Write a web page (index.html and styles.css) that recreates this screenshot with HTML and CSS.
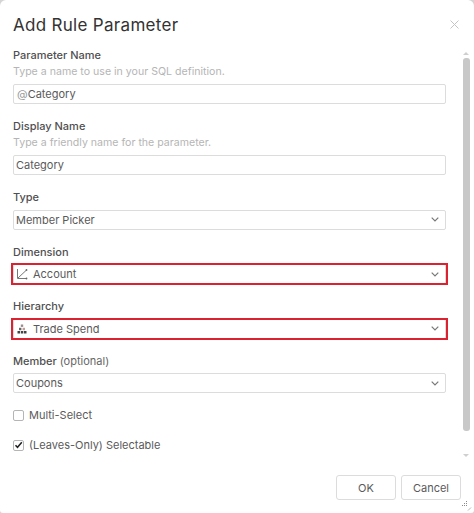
FILE: index.html
```html
<!DOCTYPE html>
<html lang="en">
<head>
  <meta charset="UTF-8">
  <meta name="viewport" content="width=device-width, initial-scale=1.0">
  <title>Add Rule Parameter</title>
  <link rel="stylesheet" href="styles.css">
</head>
<body>
  <div class="dialog">
    <div class="dialog-header">
      <h1>Add Rule Parameter</h1>
      <svg class="close-icon" width="9" height="9" viewBox="0 0 9 9"><path d="M.5.5l8 8M8.500.5l-8 8"/></svg>
    </div>

    <div class="dialog-main">
      <div class="form">
        <div class="field">
          <div class="label">Parameter Name</div>
          <div class="hint">Type a name to use in your SQL definition.</div>
          <div class="control"><span class="at">@</span>Category</div>
        </div>

        <div class="field">
          <div class="label">Display Name</div>
          <div class="hint">Type a friendly name for the parameter.</div>
          <div class="control">Category</div>
        </div>

        <div class="field">
          <div class="label">Type</div>
          <div class="control">
            <span class="value">Member Picker</span>
            <svg class="chevron" width="8" height="5" viewBox="0 0 8 5"><path d="M.7.7L4 4l3.300-3.300"/></svg>
          </div>
        </div>

        <div class="field">
          <div class="label">Dimension</div>
          <div class="control marked">
            <svg class="item-icon" width="12" height="12" viewBox="0 0 12 12"><path class="axis" d="M1.500 1v9.500H11"/><path class="trend" d="M2 10L10 2.500"/><circle cx="10.500" cy="2" r=".9"/><circle cx="10.500" cy="10.500" r=".9"/></svg>
            <span class="value">Account</span>
            <svg class="chevron" width="8" height="5" viewBox="0 0 8 5"><path d="M.7.7L4 4l3.300-3.300"/></svg>
          </div>
        </div>

        <div class="field">
          <div class="label">Hierarchy</div>
          <div class="control marked">
            <svg class="item-icon" width="12" height="12" viewBox="0 0 12 12"><rect x="4.800" y="1.500" width="2.400" height="2.400" fill="#9a8a8a"/><rect x="3" y="4.800" width="2.400" height="2.400" fill="#666"/><rect x="6.600" y="4.800" width="2.400" height="2.400" fill="#c49a9a"/><rect x="1.500" y="8" width="2.500" height="2.500" fill="#444"/><rect x="4.800" y="8" width="2.500" height="2.500" fill="#444"/><rect x="8" y="8" width="2.500" height="2.500" fill="#444"/></svg>
            <span class="value">Trade Spend</span>
            <svg class="chevron" width="8" height="5" viewBox="0 0 8 5"><path d="M.7.7L4 4l3.300-3.300"/></svg>
          </div>
        </div>

        <div class="field">
          <div class="label">Member <span class="optional">(optional)</span></div>
          <div class="control">
            <span class="value">Coupons</span>
            <svg class="chevron" width="8" height="5" viewBox="0 0 8 5"><path d="M.7.7L4 4l3.300-3.300"/></svg>
          </div>
        </div>

        <div class="check-row">
          <span class="checkbox"></span>
          <span>Multi-Select</span>
        </div>
        <div class="check-row">
          <span class="checkbox">
            <svg width="9" height="8" viewBox="0 0 9 8"><path d="M1.500 4.200L3.500 6.300 7.800 1.300"/></svg>
          </span>
          <span>(Leaves-Only) Selectable</span>
        </div>
      </div>

      <div class="scrollbar">
        <span class="arrow-up"></span>
        <div class="thumb"></div>
        <span class="arrow-down"></span>
      </div>
    </div>

    <div class="dialog-footer">
      <div class="button">OK</div>
      <div class="button">Cancel</div>
    </div>

    <svg class="grip" width="12" height="12" viewBox="0 0 12 12">
      <rect x="5" y="1" width="1" height="1"/>
      <rect x="3" y="3" width="1" height="1"/>
      <rect x="5" y="3" width="1" height="1"/>
      <rect x="1" y="5" width="1" height="1"/>
      <rect x="3" y="5" width="1" height="1"/>
      <rect x="5" y="5" width="1" height="1"/>
      <path d="M7 10.500L10 7.500"/>
    </svg>
  </div>
</body>
</html>
```

FILE: styles.css
```css
html, body {
  height: 100%;
}

body {
  margin: 0;
  background-color: #d4d4d4;
  font-family: Inter, "Open Sans", Arial, sans-serif;
  overflow: hidden;
}

.dialog {
  position: relative;
  width: 474px;
  height: 513px;
  box-sizing: border-box;
  background-color: #fff;
  border-radius: 6px 6px 3px 3px;
  padding: 0 4px 0 13px;
  display: flex;
  flex-direction: column;
  color: #444;
}

.dialog-header {
  display: flex;
  align-items: center;
  justify-content: space-between;
  height: 47px;
  padding: 5px 11px 3px 0;
  box-sizing: border-box;
}

h1 {
  margin: 0;
  font-size: 17px;
  font-weight: 400;
  color: #333;
  letter-spacing: .3px;
}

.close-icon path {
  fill: none;
  stroke: #c4c4c4;
  stroke-width: 1;
}

.dialog-main {
  display: flex;
  justify-content: space-between;
  height: 420px;
}

.form {
  width: 433px;
}

.field {
  margin-bottom: 14px;
}

.label {
  font-size: 11px;
  line-height: 16px;
  font-weight: 500;
  color: #505050;
  margin-bottom: 4.500px;
}

.label:has(+ .hint) {
  margin-bottom: 1px;
}

.optional {
  font-weight: 400;
  color: #666;
}

.hint {
  font-size: 10.600px;
  line-height: 16px;
  color: #b5b5b5;
  margin-bottom: 4px;
}

.control {
  position: relative;
  display: flex;
  align-items: center;
  height: 20px;
  box-sizing: border-box;
  border: 1px solid #dcdcdc;
  border-radius: 2px;
  padding: 0 5px 0 2px;
  font-size: 11px;
  color: #5a5a5a;
}

.at {
  margin-left: 1px;
  color: #999;
}

.value {
  flex: 1;
}

.chevron {
  margin-right: 1px;
}

.chevron path {
  fill: none;
  stroke: #777;
  stroke-width: 1.200;
}

/* red rectangle drawn over the two highlighted pickers */
.marked::after {
  content: "";
  position: absolute;
  top: -2px;
  bottom: -2px;
  left: -3px;
  right: -3px;
  border: 2px solid #dc2230;
}

.item-icon {
  margin-right: 5px;
}

.item-icon .axis, .item-icon .trend {
  fill: none;
  stroke: #777;
  stroke-width: 1;
}

.item-icon circle {
  fill: #666;
}

.check-row {
  display: flex;
  align-items: center;
  gap: 5px;
  height: 16px;
  font-size: 11px;
  color: #5a5a5a;
  margin-bottom: 14px;
}

.checkbox {
  display: flex;
  align-items: center;
  justify-content: center;
  box-sizing: border-box;
  width: 11px;
  height: 11px;
  border: 1px solid #b5b5b5;
  border-radius: 2px;
}

.checkbox path {
  fill: none;
  stroke: #222;
  stroke-width: 1.500;
}

.scrollbar {
  width: 8px;
  display: flex;
  flex-direction: column;
  align-items: center;
  margin-top: 5px;
}

.thumb {
  width: 7px;
  height: 373px;
  margin: 3px 0 23px;
  background-color: #c8c8c8;
  border-radius: 3px;
}

.arrow-up, .arrow-down {
  width: 0;
  height: 0;
  border-left: 3px solid transparent;
  border-right: 3px solid transparent;
}

.arrow-up {
  border-bottom: 3px solid #cfcfcf;
}

.arrow-down {
  border-top: 3px solid #cfcfcf;
}

.dialog-footer {
  display: flex;
  justify-content: flex-end;
  gap: 5px;
  padding: 8px 9px 0 0;
}

.button {
  width: 60px;
  height: 25px;
  box-sizing: border-box;
  border: 1px solid #dcdcdc;
  border-radius: 3px;
  display: flex;
  align-items: center;
  justify-content: center;
  font-size: 11px;
  color: #5a5a5a;
}

/* resize handle in the corner */
.grip {
  position: absolute;
  right: 1px;
  bottom: 1px;
}

.grip rect {
  fill: #8a8a8a;
}

.grip path {
  fill: none;
  stroke: #b5b5b5;
}
```
